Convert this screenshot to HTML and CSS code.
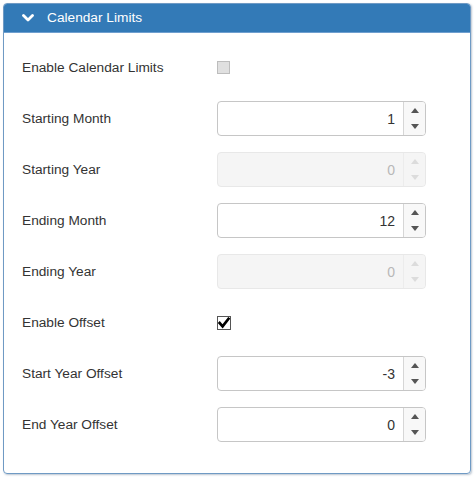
FILE: index.html
```html
<!DOCTYPE html>
<html>
<head>
<meta charset="utf-8">
<link rel="stylesheet" href="styles.css">
</head>
<body>
<div class="panel">
  <div class="panel-heading">
    <svg class="chev" width="12" height="8" viewBox="0 0 12 8"><polyline points="1.5,1.5 6,6 10.5,1.5" fill="none" stroke="#fff" stroke-width="2.8" stroke-linecap="round" stroke-linejoin="round"/></svg>
    <span class="title">Calendar Limits</span>
  </div>
  <div class="panel-body">
    <div class="label">Enable Calendar Limits</div>
    <div class="field"><span class="cb cb-disabled"></span></div>

    <div class="label">Starting Month</div>
    <div class="field"><div class="num"><span class="val">1</span><span class="spin"><span class="up"></span><span class="down"></span></span></div></div>

    <div class="label">Starting Year</div>
    <div class="field"><div class="num disabled"><span class="val">0</span><span class="spin"><span class="up"></span><span class="down"></span></span></div></div>

    <div class="label">Ending Month</div>
    <div class="field"><div class="num"><span class="val">12</span><span class="spin"><span class="up"></span><span class="down"></span></span></div></div>

    <div class="label">Ending Year</div>
    <div class="field"><div class="num disabled"><span class="val">0</span><span class="spin"><span class="up"></span><span class="down"></span></span></div></div>

    <div class="label">Enable Offset</div>
    <div class="field"><span class="cb cb-checked"><svg width="12" height="12" viewBox="0 0 12 12"><polyline points="1.6,6 4.6,9.3 10.5,1.8" fill="none" stroke="#000" stroke-width="2.7" stroke-linecap="square"/></svg></span></div>

    <div class="label">Start Year Offset</div>
    <div class="field"><div class="num"><span class="val">-3</span><span class="spin"><span class="up"></span><span class="down"></span></span></div></div>

    <div class="label">End Year Offset</div>
    <div class="field"><div class="num"><span class="val">0</span><span class="spin"><span class="up"></span><span class="down"></span></span></div></div>
  </div>
</div>
</body>
</html>
```
FILE: styles.css
```css
html, body {
  margin: 0;
  padding: 0;
  background: #fff;
}
body {
  font-family: "Liberation Sans", Arial, sans-serif;
  font-size: 14px;
  color: #333;
}
.panel {
  margin: 3px;
  width: 468px;
  height: 471px;
  box-sizing: border-box;
  border: 1px solid #6f9ac4;
  border-radius: 4px;
  box-shadow: 1px 1px 2px rgba(60, 90, 120, 0.35);
  overflow: hidden;
}
.panel-heading {
  height: 28px;
  background: #337ab7;
  border-bottom: 1px solid #6f9fcf;
  display: flex;
  align-items: center;
  padding-left: 18px;
  color: #fff;
}
.chev {
  display: block;
  margin-right: 13px;
}
.title {
  font-size: 13.7px;
  line-height: 16px;
}
.panel-body {
  padding: 17px 0 0 18px;
  display: grid;
  grid-template-columns: 195px 209px;
  grid-auto-rows: 35px;
  row-gap: 16px;
}
.label {
  display: flex;
  align-items: center;
  font-size: 13.7px;
}
.field {
  display: flex;
  align-items: center;
}
.cb {
  width: 13px;
  height: 13px;
  box-sizing: border-box;
  display: flex;
  align-items: center;
  justify-content: center;
}
.cb-disabled {
  background: #e0e0e0;
  border: 1px solid #bdbdbd;
}
.cb-checked {
  width: 14px;
  height: 14px;
  background: #fff;
  border: 1px solid #555;
}
.cb-checked svg {
  display: block;
}
.num {
  width: 209px;
  height: 35px;
  box-sizing: border-box;
  border: 1px solid #c6c6c6;
  border-radius: 4px;
  display: flex;
  background: #fff;
}
.val {
  flex: 1;
  display: flex;
  align-items: center;
  justify-content: flex-end;
  padding-right: 8px;
  color: #333;
}
.spin {
  width: 21px;
  border-left: 1px solid #d6d6d6;
  background: #f8f8f8;
  border-radius: 0 3px 3px 0;
  display: flex;
  flex-direction: column;
}
.up, .down {
  flex: 1;
  display: flex;
  align-items: center;
  justify-content: center;
}
.up::before {
  content: "";
  border-left: 4px solid transparent;
  border-right: 4px solid transparent;
  border-bottom: 5px solid #555;
}
.down::before {
  content: "";
  border-left: 4px solid transparent;
  border-right: 4px solid transparent;
  border-top: 5px solid #555;
}
.num.disabled {
  background: #f5f5f5;
  border-color: #e8e8e8;
}
.num.disabled .val {
  color: #b8b8b8;
}
.num.disabled .spin {
  background: #f5f5f5;
  border-left-color: #ececec;
}
.num.disabled .up::before {
  border-bottom-color: #dcdcdc;
}
.num.disabled .down::before {
  border-top-color: #dcdcdc;
}
```
